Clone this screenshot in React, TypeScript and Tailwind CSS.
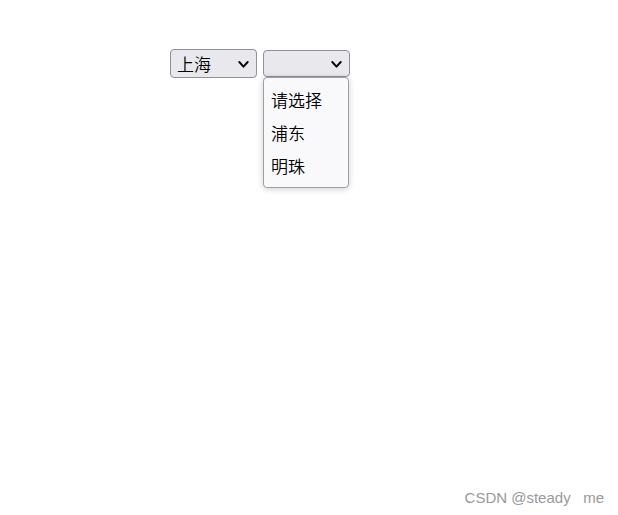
import { useState } from "react"

const cities = ["上海", "北京", "广州"]
const districts = ["请选择", "浦东", "明珠"]

function Arrow() {
  return (
    <svg
      className="pointer-events-none absolute top-1/2 right-2 -translate-y-1/2"
      width="11"
      height="8"
      viewBox="0 0 11 8"
      fill="none"
      stroke="black"
      strokeWidth="1.9"
      strokeLinecap="round"
      strokeLinejoin="round"
    >
      <path d="M1.3 2L5.5 6.7L9.7 2" />
    </svg>
  )
}

const selectClass =
  "w-full appearance-none rounded border border-[#8f8f9d] bg-[#e9e9ed] pl-1.5 pr-6 text-[17px] text-black outline-none"

function App() {
  const [city, setCity] = useState("上海")
  const [district, setDistrict] = useState("")
  const [open, setOpen] = useState(true)

  const pick = (name: string) => {
    setDistrict(name)
    setOpen(false)
  }

  return (
    <div className="flex min-h-screen flex-col justify-between bg-white font-['Noto_Sans_CJK_SC',sans-serif] font-[350] text-black">
      <div className="flex items-center justify-center gap-1.5 pt-[49px] pr-[98px]">
        <div className="relative w-[87px]">
          <select
            aria-label="城市"
            className={`${selectClass} block h-[29px]`}
            value={city}
            onChange={(e) => setCity(e.target.value)}
          >
            {cities.map((name) => (
              <option key={name}>{name}</option>
            ))}
          </select>
          <Arrow />
        </div>

        <div className="relative w-[87px]">
          <select
            aria-label="区域"
            className={`${selectClass} block h-[27px]`}
            value={district}
            onChange={(e) => setDistrict(e.target.value)}
          >
            <option value="" hidden></option>
            {districts.map((name) => (
              <option key={name}>{name}</option>
            ))}
          </select>
          <Arrow />

          {open && (
            <div className="absolute top-full left-0 w-[86px] rounded border border-[#a0a0a0] bg-[#f9f9fb] py-[5px] shadow-[0_1px_6px_rgba(0,0,0,0.2)]">
              {districts.map((name) => (
                <button
                  key={name}
                  type="button"
                  onClick={() => pick(name)}
                  className="block w-full px-[7px] text-left text-[17px] leading-[33px] hover:bg-[#e0e0e6]"
                >
                  {name}
                </button>
              ))}
            </div>
          )}
        </div>
      </div>

      <p className="pr-[14px] pb-[5px] text-right font-['Liberation_Sans',sans-serif] text-[15px] leading-6 whitespace-pre text-[#999999]">
        CSDN @steady{"   "}me
      </p>
    </div>
  )
}

export default App
